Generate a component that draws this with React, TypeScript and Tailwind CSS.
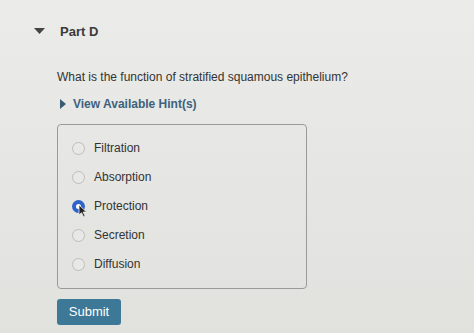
export default function App() {
  const options = ["Filtration", "Absorption", "Protection", "Secretion", "Diffusion"];
  const selected = "Protection";

  return (
    <div className="h-[333px] w-[474px] overflow-hidden bg-gradient-to-b from-[#ebebe9] to-[#e1e1de] font-['Liberation_Sans',Arial,sans-serif] text-[#333]">
      <div className="flex items-center pl-[34px] pt-[22px]">
        <svg width="11" height="7" viewBox="0 0 11 7" className="mr-[15px]">
          <path d="M0 0h11L5.5 6z" fill="#444" />
        </svg>
        <span className="text-[13px] font-bold text-[#3a3a3a]">Part D</span>
      </div>

      <div className="pl-[57px]">
        <p className="mt-[27px] text-[12px] leading-[16px]">What is the function of stratified squamous epithelium?</p>

        <div className="mt-[10px] flex items-center pl-[3px]">
          <svg width="6" height="10" viewBox="0 0 6 10" className="mr-[7px]">
            <path d="M0 0l6 5-6 5z" fill="#3b5b73" />
          </svg>
          <span className="text-[12px] font-bold text-[#3d627d]">View Available Hint(s)</span>
        </div>

        <div className="mt-[11px] w-[250px] rounded-[4px] border border-[#9a9a98] pb-[9px] pl-[14px] pt-[9px]">
          {options.map((o) => (
            <div key={o} className="flex h-[29px] items-center">
              {o === selected ? (
                <span className="relative mr-[9px] flex h-[13px] w-[13px] items-center justify-center rounded-full bg-[#2f63c9]">
                  <span className="h-[5px] w-[5px] rounded-full bg-white" />
                  <svg width="10" height="14" viewBox="0 0 10 14" className="absolute left-[6px] top-[4px]">
                    <path d="M1 1v10l2.5-2.3 2 4 1.6-.8-2-3.9H8.5z" fill="#222" stroke="#eee" strokeWidth="0.8" />
                  </svg>
                </span>
              ) : (
                <span className="mr-[9px] h-[13px] w-[13px] rounded-full border border-[#bdbdbb] bg-[#e8e8e6]" />
              )}
              <span className="text-[12px] text-[#333]">{o}</span>
            </div>
          ))}
        </div>

        <button className="mt-[10px] h-[26px] w-[64px] rounded-[3px] bg-[#3d7896] text-[13px] text-white">Submit</button>
      </div>
    </div>
  );
}
